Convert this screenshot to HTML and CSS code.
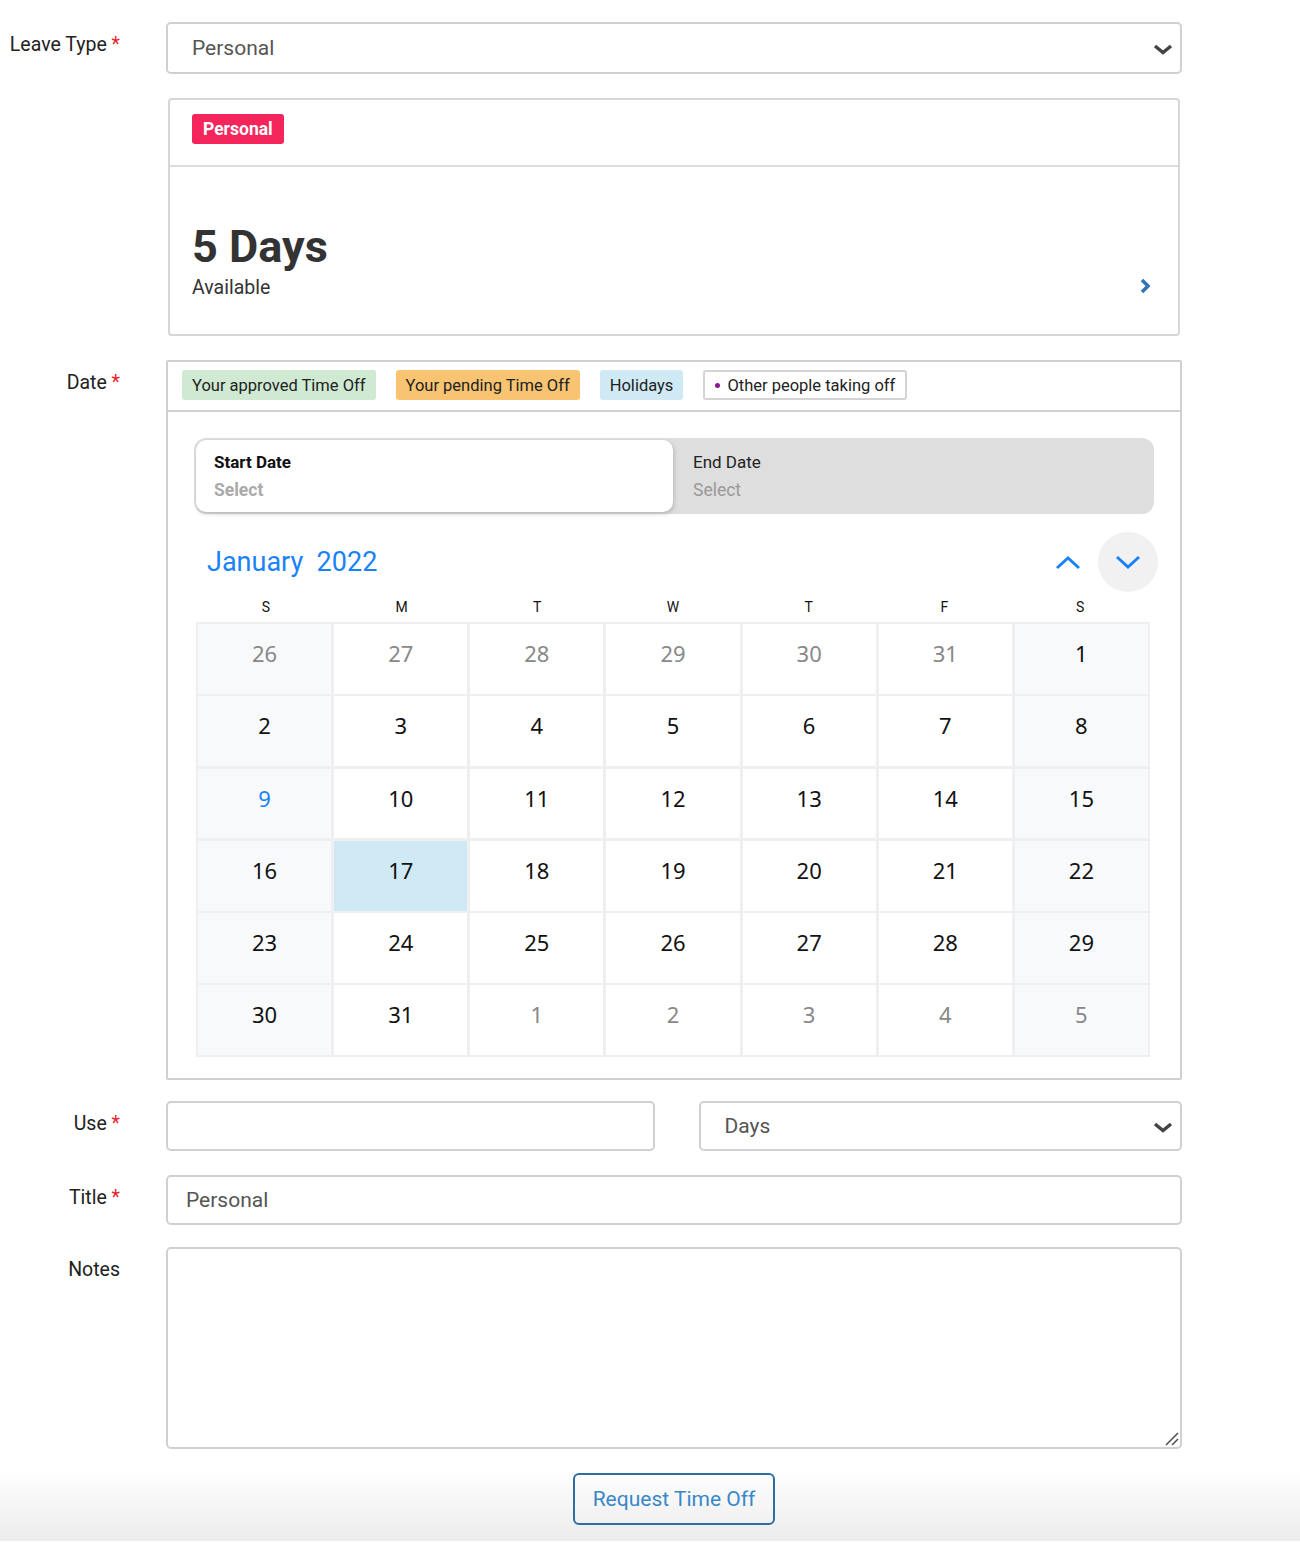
FILE: index.html
```html
<!DOCTYPE html>
<html lang="en">
<head>
    <meta charset="UTF-8">
    <title>Request Time Off</title>
    <link rel="stylesheet" href="styles.css">
</head>
<body>
    <form class="form">
        <div class="form-label">Leave Type <span class="req">*</span></div>
        <div class="select">
            <span>Personal</span>
            <svg class="select-caret" width="20" height="14" viewBox="0 0 20 14"><path d="M2 4l8 6.5 8-6.5" fill="none" stroke="#444" stroke-width="3.5"/></svg>
        </div>

        <div></div>
        <div class="balance">
            <div class="balance-head"><span class="badge">Personal</span></div>
            <div class="balance-body">
                <div>
                    <div class="balance-num">5 Days</div>
                    <div class="balance-sub">Available</div>
                </div>
                <svg width="14" height="18" viewBox="0 0 14 18"><path d="M4 3l6 6-6 6" fill="none" stroke="#2f72b8" stroke-width="3.5"/></svg>
            </div>
        </div>

        <div class="form-label">Date <span class="req">*</span></div>
        <div class="datebox">
            <div class="legend">
                <span class="chip chip-approved">Your approved Time Off</span>
                <span class="chip chip-pending">Your pending Time Off</span>
                <span class="chip chip-holiday">Holidays</span>
                <span class="chip chip-other"><i class="dot"></i>Other people taking off</span>
            </div>
            <div class="picker">
                <div class="range">
                    <div class="range-item active">
                        <div class="range-title">Start Date</div>
                        <div class="range-value">Select</div>
                    </div>
                    <div class="range-item">
                        <div class="range-title">End Date</div>
                        <div class="range-value">Select</div>
                    </div>
                </div>

                <div class="month-head">
                    <div class="month-name">January&nbsp; 2022</div>
                    <div class="month-nav">
                        <span class="nav-btn"><svg width="28" height="18" viewBox="0 0 28 18"><path d="M3 15L14 5l11 10" fill="none" stroke="#1a82f7" stroke-width="3"/></svg></span>
                        <span class="nav-btn hover"><svg width="28" height="18" viewBox="0 0 28 18"><path d="M3 4l11 10 11-10" fill="none" stroke="#1a82f7" stroke-width="3"/></svg></span>
                    </div>
                </div>

                <div class="weekdays">
                    <span>S</span><span>M</span><span>T</span><span>W</span><span>T</span><span>F</span><span>S</span>
                </div>
                <div class="days" id="days"></div>
            </div>
        </div>

        <div class="form-label">Use <span class="req">*</span></div>
        <div class="use-row">
            <input class="input" type="text">
            <div class="select">
                <span>Days</span>
                <svg class="select-caret" width="20" height="14" viewBox="0 0 20 14"><path d="M2 4l8 6.5 8-6.5" fill="none" stroke="#444" stroke-width="3.5"/></svg>
            </div>
        </div>

        <div class="form-label">Title <span class="req">*</span></div>
        <input class="input input-title" type="text" value="Personal">

        <div class="form-label">Notes</div>
        <div class="notes-wrap">
            <textarea class="notes"></textarea>
            <svg class="grip" width="16" height="16" viewBox="0 0 16 16"><path d="M15 3L3 15M15 9l-6 6" stroke="#555" stroke-width="1.6"/></svg>
        </div>
    </form>

    <div class="actions">
        <button class="btn" type="button">Request Time Off</button>
    </div>

    <script>
        // build January 2022 grid (starts on Saturday)
        const grid = document.getElementById('days');
        const cells = [];
        [26, 27, 28, 29, 30, 31].forEach(d => cells.push({ d, muted: true }));
        for (let d = 1; d <= 31; d++) cells.push({ d });
        [1, 2, 3, 4, 5].forEach(d => cells.push({ d, muted: true }));

        cells.forEach((c, i) => {
            const el = document.createElement('div');
            el.className = 'day';
            const col = i % 7;
            if (col === 0 || col === 6) el.classList.add('weekend');
            if (c.muted) el.classList.add('muted');
            if (!c.muted && c.d === 9) el.classList.add('today');
            if (!c.muted && c.d === 17) el.classList.add('holiday');
            el.textContent = c.d;
            grid.appendChild(el);
        });
    </script>
</body>
</html>
```

FILE: styles.css
```css
body {
    margin: 0;
    font-family: Roboto, 'Liberation Sans', sans-serif;
    color: #222;
    background: #fff;
}

.form {
    display: grid;
    grid-template-columns: 120px 1016px;
    column-gap: 46px;
    row-gap: 24px;
    padding-top: 22px;
}

.form-label {
    text-align: right;
    font-size: 19.5px;
    line-height: 22px;
    padding-top: 12px;
    white-space: nowrap;
}

.req {
    color: #e8232b;
}

.select {
    height: 52px;
    box-sizing: border-box;
    border: 2px solid #d0d0d0;
    border-radius: 5px;
    display: flex;
    align-items: center;
    justify-content: space-between;
    padding: 0 7px 0 24px;
    font-size: 21px;
    color: #555;
}

.select-caret {
    margin-top: 2px;
}

/* balance card */
.balance {
    margin: 0 2px;
    border: 2px solid #d6d6d6;
    border-radius: 4px;
}

.balance-head {
    padding: 14px 22px 21px;
    border-bottom: 2px solid #dcdcdc;
}

.badge {
    display: inline-block;
    background: #f4255b;
    color: #fff;
    font-weight: bold;
    font-size: 17.5px;
    line-height: 22px;
    padding: 4px 11px;
    border-radius: 3px;
}

.balance-body {
    display: flex;
    justify-content: space-between;
    align-items: flex-end;
    padding: 54px 26px 35px 22px;
}

.balance-body svg {
    margin-bottom: 4px;
}

.balance-num {
    font-size: 45px;
    font-weight: bold;
    color: #333;
    line-height: 52px;
}

.balance-sub {
    font-size: 19.5px;
    color: #333;
    line-height: 22px;
    margin-top: 4px;
}

/* date box */
.datebox {
    border: 2px solid #d0d0d0;
    border-radius: 2px;
    margin-bottom: -3px;
}

.legend {
    display: flex;
    gap: 20px;
    padding: 8px 14px 10px;
    border-bottom: 2px solid #d0d0d0;
}

.chip {
    display: inline-flex;
    align-items: center;
    height: 30px;
    box-sizing: border-box;
    padding: 0 10px;
    border-radius: 3px;
    font-size: 16.5px;
    color: #222;
}

.chip-approved { background: #cfe9d2; }
.chip-pending { background: #f8c471; }
.chip-holiday { background: #cfeaf5; }

.chip-other {
    border: 2px solid #d4d4d4;
    background: #fff;
}

.dot {
    width: 5px;
    height: 5px;
    border-radius: 50%;
    background: #8a1a8c;
    margin-right: 7px;
}

.picker {
    padding: 26px 26px 21px;
}

.range {
    display: flex;
    background: #dedede;
    border-radius: 12px;
    padding: 2px;
}

.range-item {
    flex: 1;
    padding: 12px 18px 11px;
    border-radius: 10px;
}

.range-item + .range-item {
    padding-left: 20px;
}

.range-item.active {
    background: #fff;
    box-shadow: 1px 2px 4px rgba(0, 0, 0, 0.18);
}

.range-title {
    font-size: 17px;
    line-height: 20px;
    color: #222;
}

.range-item.active .range-title {
    font-weight: bold;
    color: #111;
}

.range-value {
    font-size: 17.5px;
    line-height: 22px;
    margin-top: 7px;
    color: #999;
}

.range-item.active .range-value {
    font-weight: bold;
    color: #aaa;
}

.month-head {
    display: flex;
    justify-content: space-between;
    align-items: center;
    margin-top: 18px;
    padding-left: 13px;
}

.month-name {
    font-size: 27px;
    color: #1a82f7;
}

.month-nav {
    display: flex;
    margin-right: -4px;
}

.nav-btn {
    width: 60px;
    height: 60px;
    border-radius: 50%;
    display: flex;
    align-items: center;
    justify-content: center;
}

.nav-btn.hover {
    background: #f1f1f1;
}

.weekdays {
    display: grid;
    grid-template-columns: repeat(7, 1fr);
    margin: 4px 4px 0 2px;
    padding: 0 2px;
    font-size: 14px;
    text-align: center;
    line-height: 22px;
    color: #111;
}

.days {
    display: grid;
    grid-template-columns: repeat(7, 1fr);
    grid-auto-rows: 69.8px;
    row-gap: 2.5px;
    column-gap: 3px;
    padding: 2px;
    margin: 4px 4px 0 2px;
    background: #efeff1;
}

.day {
    background: #fff;
    text-align: center;
    font-family: 'Noto Sans', 'Open Sans', sans-serif;
    font-size: 22px;
    padding-top: 14px;
    color: #111;
}

.day.weekend { background: #f8f9fb; }
.day.muted { color: #888; }
.day.today { color: #1a82f7; }
.day.holiday { background: #cfeaf5; }

/* bottom fields */
.use-row {
    display: flex;
    gap: 44px;
}

.use-row > * {
    flex: 1 1 0;
    width: 0;
    min-width: 0;
}

.input {
    height: 50px;
    box-sizing: border-box;
    border: 2px solid #d0d0d0;
    border-radius: 5px;
    font-family: Roboto, sans-serif;
    font-size: 21px;
    color: #555;
    padding: 0 18px;
    outline: none;
}

.input-title {
    margin-bottom: -2px;
}

.use-row .select {
    height: 50px;
}

.notes-wrap {
    position: relative;
    display: flex;
}

.notes {
    flex: 1;
    height: 202px;
    box-sizing: border-box;
    border: 2px solid #d0d0d0;
    border-radius: 5px;
    font-family: Roboto, sans-serif;
    font-size: 18px;
    padding: 10px 18px;
    resize: none;
    outline: none;
}

.grip {
    position: absolute;
    right: 3px;
    bottom: 3px;
}

.actions {
    padding: 24px 118px 16px 166px;
    display: flex;
    justify-content: center;
    background: linear-gradient(to bottom, #fff 20%, #ececec 100%);
}

.btn {
    width: 202px;
    height: 52px;
    background: transparent;
    border: 2px solid #2e6da4;
    border-radius: 6px;
    color: #3a87c8;
    font-family: Roboto, sans-serif;
    font-size: 21px;
    cursor: pointer;
}
```
